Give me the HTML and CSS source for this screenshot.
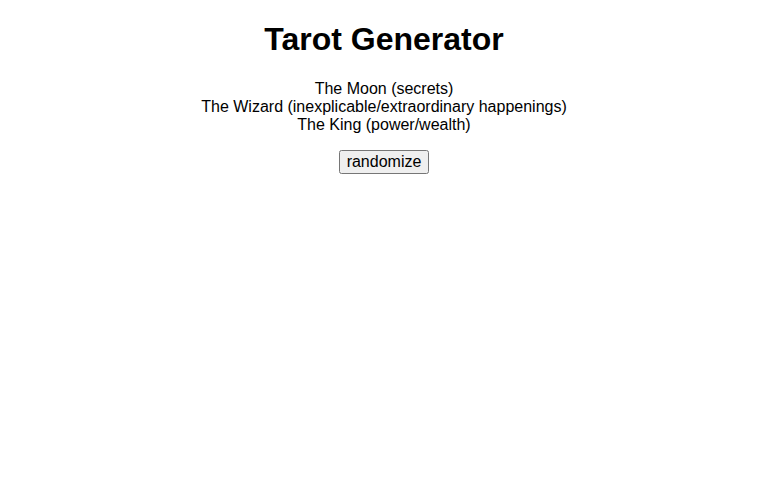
FILE: index.html
```html
<!DOCTYPE html>
<html lang="en">
<head>
    <meta charset="UTF-8">
    <meta name="viewport" content="width=device-width, initial-scale=1.0">
    <title>Tarot Generator</title>
    <link rel="stylesheet" href="styles.css">
</head>
<body>
    <h1>Tarot Generator</h1>
    <p class="cards" id="cards">
        The Moon (secrets)<br>
        The Wizard (inexplicable/extraordinary happenings)<br>
        The King (power/wealth)
    </p>
    <div class="controls">
        <button id="randomize">randomize</button>
    </div>
</body>
</html>
```

FILE: styles.css
```css
body {
    font-family: "Liberation Sans", Arial, sans-serif;
    text-align: center;
    color: #000;
    background-color: #fff;
    margin: 0 8px;
}

h1 {
    font-size: 2em;
}

.cards {
    font-size: 16px;
}

button {
    font-family: inherit;
    font-size: 16px;
}
```
